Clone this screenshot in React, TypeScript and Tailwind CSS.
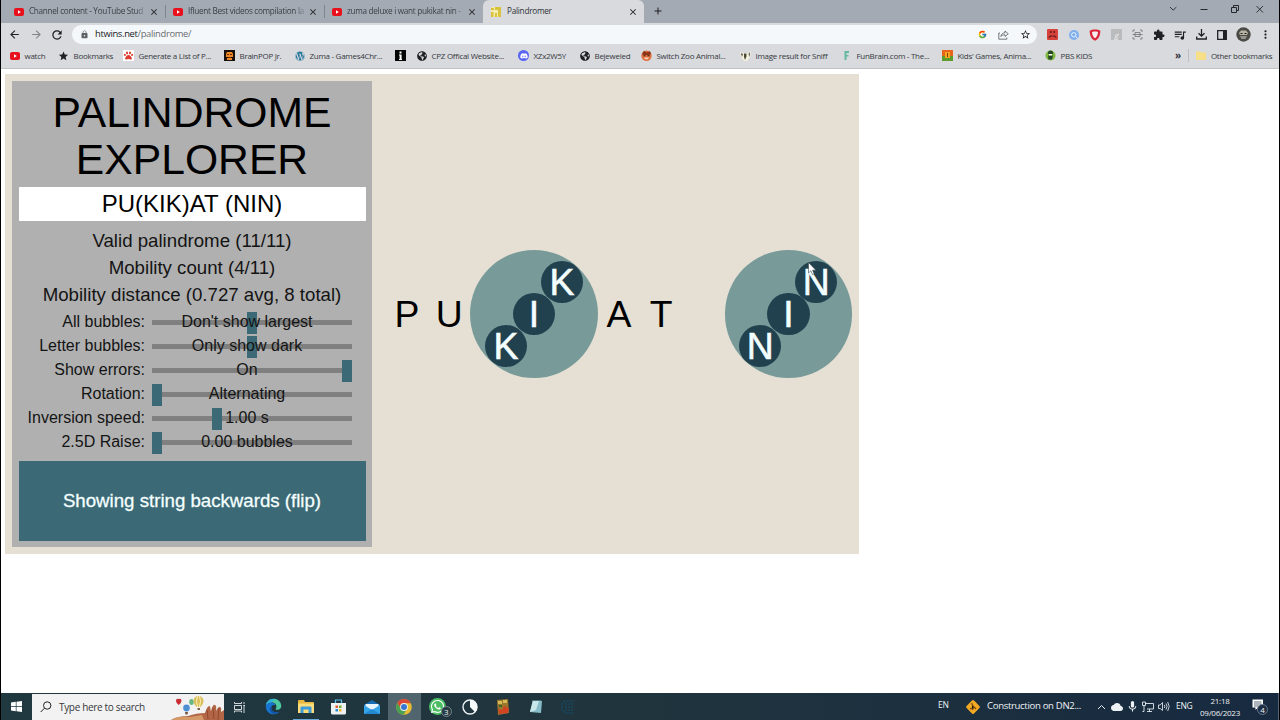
import type { ReactNode } from 'react';
import { FaPaw, FaWordpress, FaDiscord, FaGlobeAmericas, FaWhatsapp } from 'react-icons/fa';
import { FcGoogle } from 'react-icons/fc';
import {
  MdArrowBack,
  MdArrowForward,
  MdRefresh,
  MdLock,
  MdStar,
  MdStarBorder,
  MdExtension,
  MdQueueMusic,
  MdMoreVert,
  MdClose,
  MdAdd,
  MdMic,
  MdCloud,
} from 'react-icons/md';

const ui = "font-['Open_Sans',sans-serif]";

function YouTube() {
  return (
    <svg width="10" height="8" viewBox="0 0 10 8">
      <rect width="10" height="8" rx="2" fill="#e8101c" />
      <path d="M4 2.3v3.4L6.8 4z" fill="#fff" />
    </svg>
  );
}

function PalindromeIcon() {
  return (
    <svg width="10" height="10" viewBox="0 0 10 10">
      <path d="M0 0h10v10H0z" fill="#f4ecae" />
      <path d="M0 1h3v2H0zM0 5h2.500v5H0zM4 0h6v3H4zM7 3h3v7H7zM4 6h2v4H4z" fill="#d9c23c" />
    </svg>
  );
}

function Switch() {
  return (
    <svg width="11" height="11" viewBox="0 0 11 11">
      <circle cx="5.5" cy="5.7" r="5.2" fill="#e0703f" />
      <path d="M1 4.2 3 .8l2 1.4h2L9 1l1 3-2 1H3z" fill="#8c3518" />
      <path d="M2.5 5.2h2v1h-2zM6.5 5.2h2v1h-2z" fill="#3a1a10" />
      <path d="M3 7.6h5l-1 1.6H4z" fill="#f6d6b8" />
    </svg>
  );
}

function Dog() {
  return (
    <svg width="11" height="10" viewBox="0 0 11 10">
      <path d="M0 1l3 1h5l3-2-1 6-3 4H4L1 6z" fill="#f4f1dc" />
      <path d="M1 2l2 1-1 3zM4 2.500h2.500v3L5 9 4 6zM8.500 3l1.500-2-.5 5z" fill="#4c4b3c" />
    </svg>
  );
}

const tabs = [
  { id: 1, label: 'Channel content - YouTube Stud', width: 'w-[159px]' },
  { id: 2, label: 'Ifluent Best videos compilation la', width: 'w-[159px]' },
  { id: 3, label: 'zuma deluxe i want pukikat nin -', width: 'w-[158px]' },
];

const bookmarks: { label: string; width: string; icon: ReactNode }[] = [
  { label: 'watch', width: 'w-[49px]', icon: <YouTube /> },
  { label: 'Bookmarks', width: 'w-[65px]', icon: <MdStar className="size-[12px] text-[#202124]" /> },
  {
    label: 'Generate a List of P...',
    width: 'w-[101px]',
    icon: <span className="bg-white size-[11px] flex items-center justify-center"><FaPaw className="size-[9px] text-[#de3b2e]" /></span>,
  },
  {
    label: 'BrainPOP Jr.',
    width: 'w-[70px]',
    icon: (
      <svg width="11" height="11" viewBox="0 0 11 11">
        <path d="M0 0h11v11H0z" fill="#17110d" />
        <path d="M3 2h5l1 2v3H2V4zM3 8h5v2H3z" fill="#f08a24" />
        <path d="M3 4h2v1H3zM6 4h2v1H6zM4 7h3v1H4z" fill="#6d2a0b" />
      </svg>
    ),
  },
  { label: 'Zuma - Games4Chr...', width: 'w-[101px]', icon: <FaWordpress className="size-[10px] text-[#21759b]" /> },
  {
    label: '',
    width: 'w-[21px]',
    icon: (
      <svg width="11" height="11" viewBox="0 0 11 11">
        <path d="M0 0h11v11H0z" fill="#050505" />
        <path d="M4.5 1.5h2v2h-2zM4 4.5h2.6V9H7v1H4V9h.6V5.5H4z" fill="#fff" />
      </svg>
    ),
  },
  { label: 'CPZ Offical Website...', width: 'w-[102px]', icon: <FaGlobeAmericas className="size-[10px] text-[#202124]" /> },
  {
    label: 'XZx2W5Y',
    width: 'w-[61px]',
    icon: <span className="bg-[#5865f2] rounded-full size-[11px] flex items-center justify-center"><FaDiscord className="size-[8px] text-white" /></span>,
  },
  { label: 'Bejeweled', width: 'w-[62px]', icon: <FaGlobeAmericas className="size-[10px] text-[#202124]" /> },
  { label: 'Switch Zoo Animal...', width: 'w-[99px]', icon: <Switch /> },
  { label: 'Image result for Sniff', width: 'w-[101px]', icon: <Dog /> },
  {
    label: 'FunBrain.com - The...',
    width: 'w-[101px]',
    icon: (
      <svg width="10" height="11" viewBox="0 0 10 11">
        <path d="M2.5 1H7v2H4.5v2h2v1.500h-2V10h-2z" fill="#62b8a0" />
      </svg>
    ),
  },
  {
    label: "Kids' Games, Anima...",
    width: 'w-[103px]',
    icon: (
      <svg width="11" height="11" viewBox="0 0 11 11">
        <path d="M0 0h11v11H0z" fill="#e8641b" />
        <path d="M0 6h11v5H0z" fill="#5d9c2c" />
        <path d="M3 2h5v6H3z" fill="#f5a623" />
        <path d="M5 3h1v4H5z" fill="#8a3b0c" />
      </svg>
    ),
  },
  {
    label: 'PBS KIDS',
    width: 'w-[90px]',
    icon: (
      <svg width="11" height="11" viewBox="0 0 11 11">
        <circle cx="5.5" cy="5.5" r="5" fill="#7eb83c" />
        <path d="M3 3a2.5 2.5 0 0 1 5 0v1H3zM3 5.5h5L7 9.5H3.5z" fill="#27472a" />
        <path d="M4 4h3v1.400H4z" fill="#fff" />
      </svg>
    ),
  },
];

const sliders = [
  { id: 1, label: 'All bubbles:', value: "Don't show largest", offset: 'ml-[95px]' },
  { id: 2, label: 'Letter bubbles:', value: 'Only show dark', offset: 'ml-[95px]' },
  { id: 3, label: 'Show errors:', value: 'On', offset: 'ml-[190px]' },
  { id: 4, label: 'Rotation:', value: 'Alternating', offset: 'ml-0' },
  { id: 5, label: 'Inversion speed:', value: '1.00 s', offset: 'ml-[60px]' },
  { id: 6, label: '2.5D Raise:', value: '0.00 bubbles', offset: 'ml-0' },
];

function TabStrip() {
  return (
    <div className="h-[23px] shrink-0 bg-[#a4aab4] flex items-end pl-[6px] text-[#3c4046]">
      {tabs.map((tab) => (
        <div key={tab.id} className={`${tab.width} h-[23px] flex items-center shrink-0`}>
          <span className="ml-[7px] mr-[5px]"><YouTube /></span>
          <span className="w-[119px] text-[8.2px] tracking-[-0.300px] whitespace-nowrap mask-r-from-90%">{tab.label}</span>
          <MdClose className="size-[10px] ml-[1px] shrink-0 text-[#202124]" />
          {tab.id < 3 && <span className="w-px h-[13px] bg-[#7f858f] ml-auto" />}
        </div>
      ))}
      <div className="w-[161px] h-[23px] bg-[#d8dade] rounded-t-[6px] flex items-center">
        <span className="ml-[8px] mr-[6px]"><PalindromeIcon /></span>
        <span className="text-[8.2px] tracking-[-0.25px] text-[#303338]">Palindromer</span>
        <MdClose className="size-[10px] ml-auto mr-[6px] text-[#202124]" />
      </div>
      <MdAdd className="size-[12px] ml-[8px] mb-[6px] text-[#202124]" />
      <div className="ml-auto h-[21px] mr-[15px] flex items-start text-[#24272b]">
        <svg width="94" height="12" viewBox="0 0 94 12" fill="none" stroke="currentColor">
          <path d="M0 5l3.200 3.200L6.400 5" strokeWidth=".9" />
          <path d="M30.500 7.500h7" />
          <path d="M61.500 5.500h5v5h-5zM63.500 5.500v-2h5v5h-2" />
          <path d="M86.500 4l6.500 6.500M93 4l-6.500 6.500" strokeWidth=".9" />
        </svg>
      </div>
    </div>
  );
}

function Toolbar() {
  return (
    <div className="h-[23px] shrink-0 bg-[#d8dade] flex items-center text-[#202124]">
      <div className="w-[71px] flex items-center gap-[9px] pl-[7px]">
        <MdArrowBack className="size-[13px]" />
        <MdArrowForward className="size-[13px] text-[#80848a]" />
        <MdRefresh className="size-[14px] -ml-[2px]" />
      </div>
      <div className="w-[965px] h-[19px] bg-[#f5f8fa] rounded-full flex items-center">
        <MdLock className="size-[9px] ml-[8px] text-[#5f6368]" />
        <span className="ml-[6px] text-[9.4px] tracking-[-0.32px]">htwins.net<span className="text-[#6a6e73]">/palindrome/</span></span>
        <div className="ml-auto mr-[6px] flex items-center gap-[11px]">
          <FcGoogle className="size-[9px]" />
          <svg width="11" height="11" viewBox="0 0 11 11" fill="none" stroke="#55595e" strokeWidth=".8">
            <path d="M2 4H.8v6.200h8V8.500M2.800 7.500c.5-2.500 2-3.600 4.200-3.700V2l3.300 2.800L7 7.500V5.800c-1.800 0-3 .4-4.200 1.700z" />
          </svg>
          <MdStarBorder className="size-[11px]" />
        </div>
      </div>
      <div className="w-[240px] flex items-center">
        {/* extensions */}
        <svg className="ml-[10px]" width="11" height="11" viewBox="0 0 11 11">
          <rect width="11" height="11" rx="1" fill="#d8403a" />
          <path d="M3 2h1.500v2H3zM6.500 2H8v2H6.500zM1 8.500l2-2h5l2 2H8L7 7.500H4l-1 1z" fill="#5e1a1c" />
        </svg>
        <svg className="ml-[11px]" width="10" height="10" viewBox="0 0 10 10">
          <circle cx="5" cy="5" r="5" fill="#7fb0ed" />
          <circle cx="4.800" cy="4.800" r="2.200" fill="none" stroke="#e9f3ff" />
          <path d="M6.500 6.500l2 2" stroke="#e9f3ff" />
        </svg>
        <svg className="ml-[10px]" width="12" height="12" viewBox="0 0 12 12">
          <path d="M6 .5c2 0 4 .4 5.300 1.200C11.300 7 9.500 10 6 11.800 2.500 10 .7 7 .7 1.700 2 .9 4 .5 6 .5z" fill="#dc2437" />
          <path d="M3 3C5 2.400 7 2.400 9 3 8.800 6 7.800 8 6 9.200 4.200 8 3.200 6 3 3z" fill="#f7eef0" />
        </svg>
        <span className="ml-[10px] size-[11px] bg-[#b9bbbd] text-[#f1f1f1] text-[8px] leading-[11px] text-center italic">g</span>
        <svg className="ml-[10px]" width="11" height="11" viewBox="0 0 11 11" fill="none" stroke="#6d7175">
          <path d="M1 3V1h2M8 1h2v2M10 8v2H8M3 10H1V8" strokeWidth=".8" />
          <path d="M3 3.500h5v4H3zM.5 5.500h10" strokeWidth=".8" />
        </svg>
        <MdExtension className="size-[12px] ml-[10px]" />
        <MdQueueMusic className="size-[14px] ml-[8px]" />
        <svg className="ml-[9px]" width="11" height="11" viewBox="0 0 11 11" fill="none" stroke="currentColor" strokeWidth="1.300">
          <path d="M5.500 0v7M2.500 4.200l3 3 3-3M.7 7.500V10h9.600V7.500" />
        </svg>
        <svg className="ml-[10px]" width="10" height="10" viewBox="0 0 10 10">
          <path d="M.7.700h8.600v8.600H.7z" fill="none" stroke="currentColor" strokeWidth="1.300" />
          <path d="M6 .5h3.500v9H6z" fill="currentColor" />
        </svg>
        <svg className="ml-[9px]" width="15" height="15" viewBox="0 0 15 15">
          <circle cx="7.500" cy="7.500" r="7.200" fill="#4b4a45" />
          <path d="M3 6l2-2.500h5L12 6l-1 2H4z" fill="#b8b4a5" />
          <path d="M4 9h7l-1.500 3h-4z" fill="#96948a" />
          <path d="M4.500 6h2v1h-2zM8.500 6h2v1h-2z" fill="#1c1c1a" />
        </svg>
        <MdMoreVert className="size-[13px] ml-[8px]" />
      </div>
    </div>
  );
}

function BookmarkBar() {
  return (
    <div className="h-[23px] shrink-0 bg-[#d8dade] border-b border-[#bfc1c5] flex items-center pl-[8px] pb-[3px] text-[8px] tracking-[-0.28px] text-[#36393d] whitespace-nowrap">
      {bookmarks.map((item, index) => (
        <div key={index} className={`${item.width} flex items-center gap-[4.500px] shrink-0`}>
          <span className="w-[11px] flex justify-center shrink-0">{item.icon}</span>
          {item.label}
        </div>
      ))}
      <span className="ml-[40px] font-bold text-[10px] leading-none pb-[2px]">»</span>
      <span className="w-px h-[13px] bg-[#bcbec2] ml-[7px]" />
      <svg className="ml-[7px] mr-[5px]" width="10" height="9" viewBox="0 0 10 9">
        <path d="M0 1.500Q0 .5 1 .5h3l1 1h4q1 0 1 1V8q0 1-1 1H1Q0 9 0 8z" fill="#f6df86" />
      </svg>
      Other bookmarks
    </div>
  );
}

function ControlPanel() {
  return (
    <div className="w-[360px] h-[466px] bg-[#b0b0b0] pt-[8px] px-[6.500px] flex flex-col text-center text-black shrink-0">
      <h1 className="text-[42.670px] leading-[46.700px] h-[98px]">
        PALINDROME
        <br />
        EXPLORER
      </h1>
      <div className="h-[34px] bg-white text-[24px] leading-[33px]">PU(KIK)AT (NIN)</div>
      <div className="pt-[7.300px] text-[18.670px] leading-[26.700px] text-[#141414]">
        <p>Valid palindrome (11/11)</p>
        <p>Mobility count (4/11)</p>
        <p>Mobility distance (0.727 avg, 8 total)</p>
      </div>
      <div className="mt-[2.700px] text-[16px] text-[#141414]">
        {sliders.map((slider) => (
          <div key={slider.id} className="h-[24px] flex">
            <span className="w-[126.500px] text-right leading-[22px]">{slider.label}</span>
            <div className="relative ml-[7px] w-[200px] h-[24px]">
              <div className="h-[5px] mt-[9px] bg-[#808080]" />
              <div className={`w-[10px] h-[22.500px] -mt-[13.500px] bg-[#3b6975] ${slider.offset}`} />
              <span className="absolute left-0 top-0 w-[190px] text-center leading-[22px]">{slider.value}</span>
            </div>
          </div>
        ))}
      </div>
      <button className="mt-[5.500px] h-[80px] bg-[#3b6975] text-[18.670px] text-[#f4ffff] [-webkit-text-stroke:0.3px]">Showing string backwards (flip)</button>
    </div>
  );
}

function Letter({ children }: { children: ReactNode }) {
  return <span className="w-[42.400px] shrink-0 text-center">{children}</span>;
}

function Bubble({ letters }: { letters: string[] }) {
  const places = ['left-[70.200px] top-[10.600px]', 'left-[42.400px] top-[42.400px]', 'left-[14.200px] top-[74.200px]'];
  return (
    <div className="relative size-[127.200px] rounded-full bg-[#789a99] shrink-0 text-[#f3feff] [-webkit-text-stroke:0.6px]">
      {letters.map((letter, index) => (
        <span key={index} className={`absolute size-[42.400px] rounded-full bg-[#21414f] leading-[42.400px] text-center ${places[index]}`}>
          {letter}
        </span>
      ))}
    </div>
  );
}

function Explorer() {
  return (
    <div className="relative w-[854px] h-[480px] bg-[#e6e0d4] p-[7px] flex font-['Liberation_Sans',Arial,sans-serif]">
      <ControlPanel />
      <div className="ml-[13.700px] h-[466px] flex items-center text-[37.330px] leading-[42.400px] text-black">
        <Letter>P</Letter>
        <Letter>U</Letter>
        <Bubble letters={['K', 'I', 'K']} />
        <Letter>A</Letter>
        <Letter>T</Letter>
        <Letter>&nbsp;</Letter>
        <Bubble letters={['N', 'I', 'N']} />
      </div>
      {/* mouse pointer */}
      <svg className="absolute left-[803px] top-[188px]" width="9" height="14" viewBox="0 0 9 14">
        <path d="M.5.500v10.500l2.400-2.200 1.600 3.800 1.700-.7-1.600-3.700h3.300z" fill="#fff" stroke="#3c4a50" strokeWidth=".6" />
      </svg>
    </div>
  );
}

function TaskIcon({ children, className = '' }: { children: ReactNode; className?: string }) {
  return <div className={`w-[32.800px] h-full flex items-center justify-center shrink-0 ${className}`}>{children}</div>;
}

function Taskbar() {
  return (
    <div className="h-[27px] shrink-0 bg-linear-to-r from-[#20383f] via-[#20343e] to-[#172a40] flex items-center text-[#eef2f4]">
      <div className="w-[31px] flex justify-center">
        <svg width="11" height="11" viewBox="0 0 11 11">
          <path d="M0 1.500l4.800-.7v4.500H0zM5.500.700L11 0v5.300H5.500zM0 6h4.800v4.300L0 9.600zM5.500 6H11v5l-5.500-.7z" fill="#fff" />
        </svg>
      </div>
      <div className="w-[192px] h-[26px] mt-px bg-[#f2f2f2] flex items-center text-[#35383b]">
        <svg className="ml-[8px]" width="12" height="12" viewBox="0 0 12 12" fill="none" stroke="#222" strokeWidth="1">
          <circle cx="7.200" cy="4.500" r="3.700" />
          <path d="M4.500 7.200L.7 11" />
        </svg>
        <span className="ml-[7px] text-[10px] tracking-[-0.330px] whitespace-nowrap">Type here to search</span>
        <svg className="ml-auto shrink-0" width="54" height="26" viewBox="0 0 54 26">
          <path d="M1 26c5-3 10-4 17-4 6-2 11-3 17-3 1-3 2-6 4-7 2 0 1 3 2 5 1-3 2-7 4-6s1 3 1 6c1-2 3-5 4-4 2 1 1 3 1 5l3-2v10z" fill="#b26645" />
          <path d="M1 26c7-4 13-4 19-3l12-2 2 5z" fill="#d39a68" />
          <path d="M37 16l1 9M43 14l1 11M49 14l-1 12" stroke="#8f4930" strokeWidth="1" />
          <path d="M6 7q0-3 2.700-2 2.800-1 2.800 2 0 2-2.800 4Q6 9 6 7z" fill="#c92e36" />
          <ellipse cx="16.500" cy="14" rx="3.300" ry="3.400" fill="#4d8fd3" />
          <path d="M15 18h3l-.5 2.500h-2z" fill="#72543b" />
          <ellipse cx="21.500" cy="8" rx="2.300" ry="3" fill="#69b783" />
          <path d="M23.500 7a5 5 0 0 1 10 0q0 3-3 6h-4q-3-3-3-6z" fill="#d8bd58" />
          <path d="M27.500 2q-2 5 0 11M29.500 2q2 5 0 11" stroke="#fff3bd" fill="none" />
          <path d="M27.500 14H30v2h-2.500z" fill="#7d6242" />
        </svg>
      </div>
      <TaskIcon>
        <svg width="12" height="12" viewBox="0 0 12 12" fill="none" stroke="#e5eaec" strokeWidth=".9">
          <path d="M.5 1v1.500h7V1M.5 4.500h7v4h-7zM.5 11.500V10h7v1.500M10 1v2M10 6v6" />
          <path d="M9.300 4h1.700v1.500H9.300z" fill="#e5eaec" stroke="none" />
        </svg>
      </TaskIcon>
      <TaskIcon className="pl-px">
        <svg width="17" height="17" viewBox="0 0 24 24">
          <path d="M12 1C6.500 1 2 5 1.200 10.500 2.500 8 5.500 6.500 9 6.500c5 0 7.500 3 7 6.500 0 1.500-1.500 2-1 3 1 1.500 7.500 1 8-4.500C23 5.500 18.500 1 12 1z" fill="#4cc9a0" />
          <path d="M12 1C6.500 1 2 5 1.200 10.500 2.500 8 5.500 6.500 9 6.500l5-5.300z" fill="#30b2dc" />
          <path d="M1.200 10.500C2.500 8 5.500 6.500 9 6.500c4 0 5.500 2 5.500 4-1-1-4.500-1-5.500 2-1 4 2.500 8 7 8 2 0 3.500-.5 4.500-1C18 22 15 23 12 23 5.500 23 .500 17.500 1.200 10.500z" fill="#1673cf" />
          <path d="M9 12.500c-1 4 2.500 8 7 8 2 0 3.500-.5 4.500-1-3 3.500-8.500 3.500-12 .5-2-2-2.500-6 .5-7.500z" fill="#1454a0" />
        </svg>
      </TaskIcon>
      <TaskIcon className="relative">
        <svg width="16" height="13" viewBox="0 0 16 13">
          <path d="M0 1q0-1 1-1h5l1 2h8q1 0 1 1v9H0z" fill="#eab73f" />
          <path d="M0 3.500h16V13H0z" fill="#fbdc7a" />
          <path d="M2.500 7.500q0-1 1-1h9q1 0 1 1V13h-3V9.500h-5V13h-3z" fill="#3f9bdc" />
        </svg>
        <span className="absolute inset-x-[3px] bottom-0 h-[1.500px] bg-[#69aadb]" />
      </TaskIcon>
      <TaskIcon>
        <svg width="15" height="16" viewBox="0 0 15 16">
          <path d="M4.500 4V1h6v3" fill="none" stroke="#5abdf0" strokeWidth="1.200" />
          <path d="M0 4h15v10q0 1.500-1.500 1.500h-12Q0 15.500 0 14z" fill="#eef1f2" />
          <path d="M4.500 6.500H7V9H4.500z" fill="#e35b32" />
          <path d="M8 6.500h2.500V9H8z" fill="#75ac35" />
          <path d="M4.500 10H7v2.500H4.500z" fill="#288ed4" />
          <path d="M8 10h2.500v2.500H8z" fill="#f0b92c" />
        </svg>
      </TaskIcon>
      <TaskIcon>
        <svg width="16" height="14" viewBox="0 0 16 14">
          <path d="M0 5l8-5 8 5v9H0z" fill="#176db5" />
          <path d="M1.500 4h13v6h-13z" fill="#e8f5fc" />
          <path d="M0 5l8 5 8-5v9H0z" fill="#35a5e8" />
          <path d="M0 14l8-5 8 5z" fill="#2389d3" />
        </svg>
      </TaskIcon>
      <TaskIcon className="bg-[#50656e]">
        <svg width="16" height="16" viewBox="0 0 16 16">
          <circle cx="8" cy="8" r="7.800" fill="#e9bd31" />
          <path d="M1.200 4A7.800 7.800 0 0 1 14.800 4.200H8L4.700 10z" fill="#d94a38" />
          <path d="M1.200 4A7.800 7.800 0 0 0 7.500 15.800L11 9.800 5 10z" fill="#4aa153" />
          <circle cx="8" cy="8" r="3.900" fill="#f3f4f3" />
          <circle cx="8" cy="8" r="3" fill="#3976d2" />
        </svg>
      </TaskIcon>
      <TaskIcon>
        <span className="relative size-[17px] rounded-full bg-[#4bbd63] flex items-center justify-center">
          <FaWhatsapp className="size-[15px] text-white" />
          <span className="absolute -right-[6px] -bottom-[2px] size-[11px] rounded-full bg-[#263b43] border border-[#758188] text-[8px] leading-[9px] text-center">3</span>
        </span>
      </TaskIcon>
      <TaskIcon>
        <svg width="16" height="16" viewBox="0 0 16 16">
          <circle cx="8" cy="8" r="7" fill="none" stroke="#eef3f5" strokeWidth="1.400" />
          <path d="M8 8V1a7 7 0 0 1 5 12z" fill="#f7fafb" />
        </svg>
      </TaskIcon>
      <TaskIcon>
        <svg width="14" height="16" viewBox="0 0 14 16">
          <path d="M1 1l11-1 1 14-11 2z" fill="#9a752b" />
          <path d="M2 2h4v3H2zM7 1h4v3H7z" fill="#d5bb57" />
          <path d="M2 10l4 1 2-4 5 2-1 5-9 1z" fill="#d04424" />
          <path d="M3 6h3v2H3z" fill="#3e622b" />
        </svg>
      </TaskIcon>
      <TaskIcon>
        <svg width="14" height="15" viewBox="0 0 14 15">
          <path d="M4 1l9 1-1 12-11-1z" fill="#86bdc8" />
          <path d="M4 1l6 1-3 9-6 2z" fill="#c9e6e9" />
          <path d="M3 1.500h9" stroke="#4c727c" />
        </svg>
      </TaskIcon>
      <TaskIcon>
        <svg width="14" height="14" viewBox="0 0 14 14" fill="none" stroke="#15506c">
          <path d="M13 1H4L1 4v6l3 3h9M4 4h9M4 7h8M4 10h9" strokeDasharray="2 1" strokeWidth="1.200" />
        </svg>
      </TaskIcon>

      <div className="ml-auto flex items-center h-full whitespace-nowrap">
        <span className="text-[8.500px] mb-[3px]">EN</span>
        <svg className="ml-[16px]" width="16" height="16" viewBox="0 0 16 16">
          <rect x="2.700" y="2.700" width="10.600" height="10.600" rx="1.500" fill="#f2a823" transform="rotate(45 8 8)" />
          <path d="M6 4.500l2 1M7 6l2 2-2 3M8 7l3 3M5 10l2-1" stroke="#754b12" strokeWidth="1.200" />
        </svg>
        <span className="ml-[6px] w-[95px] text-[9.600px] tracking-[-0.340px]">Construction on DN2...</span>
        <svg className="ml-[15px]" width="9" height="6" viewBox="0 0 9 6" fill="none" stroke="#e5eaf0">
          <path d="M1 5l3.500-3.500L8 5" />
        </svg>
        <MdCloud className="size-[12px] ml-[5px]" />
        <MdMic className="size-[13px] ml-[3px]" />
        <svg className="ml-[3px]" width="12" height="12" viewBox="0 0 12 12" fill="none" stroke="#e5eaf0" strokeWidth=".9">
          <path d="M3 2.500h8.500v5.500H5M7.500 8v2.500M5 10.500h5M.5 1h3v3.500h-3zM2 4.500v6H.5" />
        </svg>
        <svg className="ml-[4px]" width="12" height="11" viewBox="0 0 12 11" fill="none" stroke="#d9e0e7" strokeWidth=".9">
          <path d="M.5 4h1.700L4.500 1.500v8L2.200 7.500H.5zM6.300 4q1 1.500 0 3M8 2.500q2 3 0 6M9.700 1q3 4.500 0 9" />
        </svg>
        <span className="ml-[6px] w-[17px] text-[8.500px] tracking-[-0.300px]">ENG</span>
        <div className="ml-[7px] w-[40px] text-[8px] leading-[12px] tracking-[-0.250px] flex flex-col items-center">
          <span>21:18</span>
          <span>09/06/2023</span>
        </div>
        <div className="relative ml-[12px] mr-[10px] w-[16px] h-[15px]">
          <svg width="12" height="12" viewBox="0 0 12 12">
            <path d="M.5.500h10.500v8H6L3.500 11V8.500h-3z" fill="#fff" />
            <path d="M2 3h7.500M2 5h7.500M2 7h5" stroke="#1a2b40" strokeWidth=".7" />
          </svg>
          <span className="absolute right-0 bottom-[-1px] size-[11px] rounded-full bg-[#1d2e42] border border-[#67788a] text-[8px] leading-[9px] text-center">4</span>
        </div>
      </div>
      <span className="w-px h-full bg-[#53657a]" />
    </div>
  );
}

export default function App() {
  return (
    <div className={`w-[1280px] h-[720px] bg-black px-px flex flex-col overflow-hidden ${ui}`}>
      <TabStrip />
      <Toolbar />
      <BookmarkBar />
      <main className="flex-1 bg-white pl-[4px] pt-[5px]">
        <Explorer />
      </main>
      <Taskbar />
    </div>
  );
}
